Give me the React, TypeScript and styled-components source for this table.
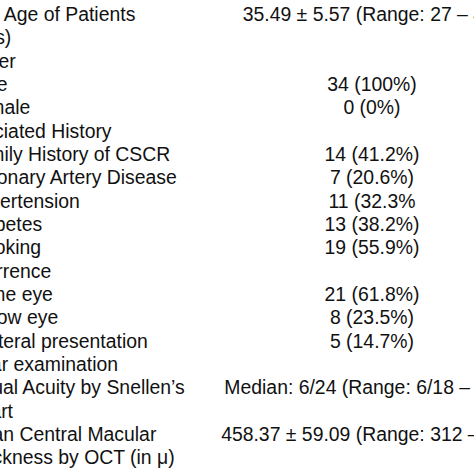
import { Fragment } from "react";
import styled, { createGlobalStyle } from "styled-components";

type Row = { label: string; value?: string; sub?: boolean };

const rows: Row[] = [
  { label: "Mean Age of Patients (years)", value: "35.49 ± 5.57 (Range: 27 – 45)" },
  { label: "Gender" },
  { label: "Male", value: "34 (100%)", sub: true },
  { label: "Female", value: "0 (0%)", sub: true },
  { label: "Associated History" },
  { label: "Family History of CSCR", value: "14 (41.2%)", sub: true },
  { label: "Coronary Artery Disease", value: "7 (20.6%)", sub: true },
  { label: "Hypertension", value: "11 (32.3%", sub: true },
  { label: "Diabetes", value: "13 (38.2%)", sub: true },
  { label: "Smoking", value: "19 (55.9%)", sub: true },
  { label: "Occurrence" },
  { label: "Same eye", value: "21 (61.8%)", sub: true },
  { label: "Fellow eye", value: "8 (23.5%)", sub: true },
  { label: "Bilateral presentation", value: "5 (14.7%)", sub: true },
  { label: "Ocular examination" },
  {
    label: "Visual Acuity by Snellen’s Chart",
    value: "Median: 6/24 (Range: 6/18 – 6/60)",
    sub: true,
  },
  {
    label: "Mean Central Macular Thickness by OCT (in μ)",
    value: "458.37 ± 59.09 (Range: 312 – 590)",
    sub: true,
  },
];

const GlobalStyle = createGlobalStyle`
  html, body {
    margin: 0;
    padding: 0;
    background: #fff;
  }
`;

// the table is a crop of a wider one: left edge runs off the page
const Page = styled.div`
  width: 474px;
  height: 474px;
  overflow: hidden;
  background: #fff;
`;

const Table = styled.div`
  display: grid;
  grid-template-columns: 246px 350px;
  margin-left: -49px;
  padding-top: 2.9px;
  font-family: "Liberation Sans", Arial, sans-serif;
  font-size: 19.4px;
  line-height: 23.34px;
  color: #111;
`;

const Label = styled.div<{ $sub?: boolean }>`
  padding-left: ${(p) => (p.$sub ? "14.6px" : "0")};
`;

const Value = styled.div`
  display: flex;
  justify-content: center;
  white-space: nowrap;
`;

export default function App() {
  return (
    <Page>
      <GlobalStyle />
      <Table>
        {rows.map((r) => (
          <Fragment key={r.label}>
            <Label $sub={r.sub}>{r.label}</Label>
            <Value>
              <span>{r.value ?? ""}</span>
            </Value>
          </Fragment>
        ))}
      </Table>
    </Page>
  );
}
